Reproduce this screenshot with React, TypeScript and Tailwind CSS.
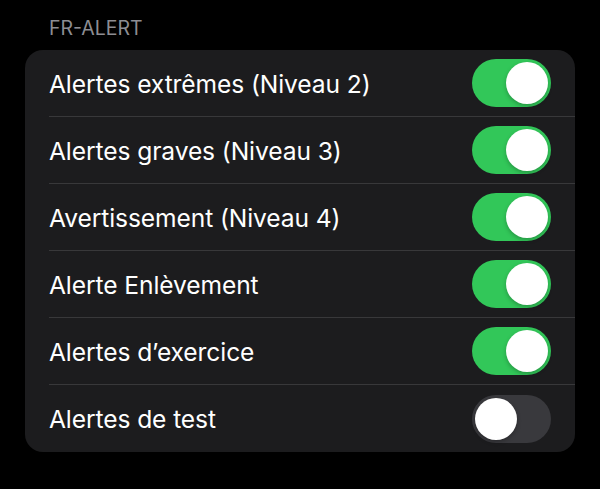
import { useState } from "react";

const items = [
  { label: "Alertes extrêmes (Niveau 2)", on: true },
  { label: "Alertes graves (Niveau 3)", on: true },
  { label: "Avertissement (Niveau 4)", on: true },
  { label: "Alerte Enlèvement", on: true },
  { label: "Alertes d’exercice", on: true },
  { label: "Alertes de test", on: false },
];

function Toggle({ on, onClick }: { on: boolean; onClick: () => void }) {
  return (
    <button
      onClick={onClick}
      className={`w-[79px] h-[48px] rounded-full p-[3px] flex items-center ${
        on ? "bg-[#32c759] justify-end" : "bg-[#39393d] justify-start"
      }`}
    >
      <span className="w-[42px] h-[42px] rounded-full bg-white shadow-[0_2px_4px_rgba(0,0,0,0.25)]" />
    </button>
  );
}

export default function App() {
  const [state, setState] = useState(items.map((i) => i.on));

  return (
    <div className="w-[600px] h-[489px] bg-black font-['Inter',sans-serif] pt-[15px]">
      <div className="px-[49px] text-[19.5px] leading-[27px] text-[#8d8d93] mb-[8px]">
        FR-ALERT
      </div>
      <div className="mx-[25px] bg-[#1c1c1e] rounded-[18px] overflow-hidden">
        {items.map((item, i) => (
          <div key={item.label} className="pl-[24px]">
            <div
              className={`h-[67px] pr-[24px] flex items-center justify-between ${
                i < items.length - 1 ? "border-b border-[#38383a]" : ""
              }`}
            >
              <span className="text-white text-[24.6px] tracking-[-0.1px] pt-[2px]">
                {item.label}
              </span>
              <Toggle
                on={state[i]}
                onClick={() =>
                  setState((s) => s.map((v, j) => (j === i ? !v : v)))
                }
              />
            </div>
          </div>
        ))}
      </div>
    </div>
  );
}
